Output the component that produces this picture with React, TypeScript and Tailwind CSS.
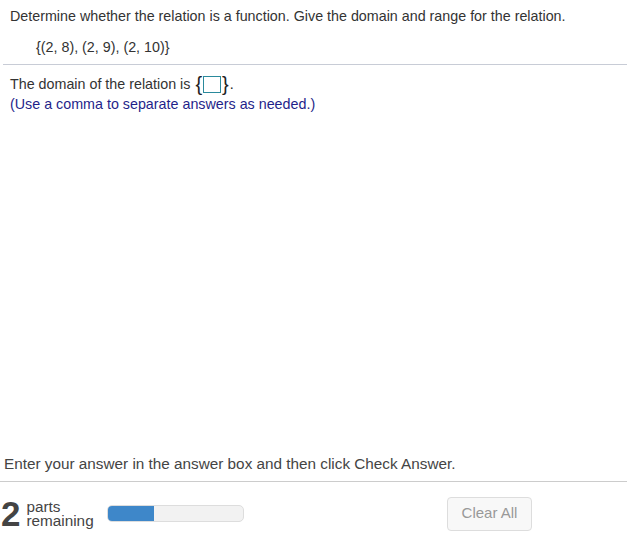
export default function App() {
  return (
    <div className="w-[627px] h-[540px] flex flex-col bg-white text-[#333] font-['Liberation_Sans',Arial,sans-serif]">
      {/* Question */}
      <div className="px-[10px] pt-[7px]">
        <p className="text-[14.3px] leading-[18px]">
          Determine whether the relation is a function. Give the domain and range for the relation.
        </p>
        <p className="text-[14.3px] leading-[18px] mt-[13px] ml-[26px]">{'{(2, 8), (2, 9), (2, 10)}'}</p>
      </div>
      <div className="ml-[3px] mt-[8px] border-t border-[#c8ccd6]" />

      {/* Answer part */}
      <div className="px-[10px] pt-[9px] text-[14.3px] leading-[20px]">
        <div className="flex items-center">
          <span>The domain of the relation is</span>
          <span className="ml-[5px] flex items-center text-[#222]">
            <span className="text-[20px] leading-[20px] font-light">{'{'}</span>
            <span className="mx-[1px] w-[18px] h-[17px] border border-[#2a8a9c] bg-white" />
            <span className="text-[20px] leading-[20px] font-light">{'}'}</span>
            <span className="ml-[1px]">.</span>
          </span>
        </div>
        <p className="text-[#1f1f8a]">(Use a comma to separate answers as needed.)</p>
      </div>

      <div className="flex-1" />

      {/* Footer */}
      <p className="px-[4px] text-[15.3px] leading-[18px] text-[#444]">
        Enter your answer in the answer box and then click Check Answer.
      </p>
      <div className="mt-[8px] border-t border-[#ccc]" />
      <div className="flex items-center h-[58px] pt-[5px]">
        <span className="ml-[1px] text-[35px] font-bold leading-none text-[#444]">2</span>
        <div className="ml-[6px] flex flex-col text-[15.3px] leading-[14px] text-[#444]">
          <span>parts</span>
          <span>remaining</span>
        </div>
        <div className="ml-[13px] w-[137px] h-[17px] rounded-[5px] bg-[#f2f2f2] border border-[#ddd] overflow-hidden flex">
          <div className="w-[46px] h-full bg-[#3e87c9]" />
        </div>
        <div className="flex-1" />
        <button className="mr-[95px] w-[85px] h-[34px] border border-[#ddd] rounded-[4px] bg-[#f8f8f8] text-[#999] text-[15px]">
          Clear All
        </button>
      </div>
    </div>
  );
}
